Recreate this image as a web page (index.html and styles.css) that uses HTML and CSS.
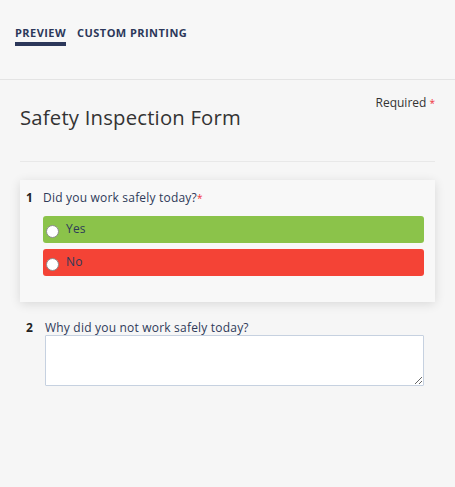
FILE: index.html
```html
<!DOCTYPE html>
<html lang="en">
<head>
<meta charset="utf-8">
<link rel="stylesheet" href="styles.css">
</head>
<body>
<header class="topbar">
  <nav class="tabs">
    <span class="tab active">PREVIEW</span>
    <span class="tab">CUSTOM PRINTING</span>
  </nav>
</header>
<main class="form">
  <div class="form-head">
    <h1 class="title">Safety Inspection Form</h1>
    <div class="required">Required <span class="star">*</span></div>
  </div>
  <div class="card">
    <div class="question">
      <span class="num">1</span>
      <div class="q-body">
        <div class="q-label">Did you work safely today?<span class="star">*</span></div>
        <label class="option yes"><input type="radio" name="q1" class="radio"><span>Yes</span></label>
        <label class="option no"><input type="radio" name="q1" class="radio"><span>No</span></label>
      </div>
    </div>
  </div>
  <div class="question q2">
    <span class="num">2</span>
    <div class="q-body">
      <div class="q-label">Why did you not work safely today?</div>
      <textarea class="answer"></textarea>
    </div>
  </div>
</main>
</body>
</html>
```
FILE: styles.css
```css
* { box-sizing: border-box; }
body {
  margin: 0;
  background: #f6f6f6;
  font-family: "Open Sans", "Liberation Sans", sans-serif;
  color: #2e3a59;
}
.topbar {
  height: 80px;
  border-bottom: 1px solid #e4e4e4;
  background: #f7f7f7;
  padding: 26px 0 0 15px;
}
.tabs { display: flex; gap: 11px; }
.tab {
  font-size: 11px;
  letter-spacing: 0.45px;
  font-weight: 700;
  color: #2c375a;
  padding-bottom: 2px;
  border-bottom: 4px solid transparent;
  line-height: 14px;
}
.tab.active { border-bottom-color: #2c375a; }
.form { padding: 0 20px; }
.form-head {
  display: flex;
  justify-content: space-between;
  align-items: flex-start;
  border-bottom: 1px solid #e8e8e8;
  height: 82px;
}
.title {
  margin: 25px 0 0 0;
  font-size: 20.3px;
  letter-spacing: 0.2px;
  font-weight: 400;
  color: #333;
  line-height: 24px;
}
.required {
  margin: 15px 0 0 0;
  font-size: 12px;
  color: #333;
  line-height: 16px;
}
.star { color: #f0323c; font-size: 10px; vertical-align: top; }
.card {
  margin-top: 18px;
  background: #f8f8f8;
  box-shadow: 0 2px 10px rgba(0,0,0,0.12);
  padding: 10px 11px 20px 6px;
}
.question { display: flex; }
.num {
  width: 17px;
  font-size: 12px;
  font-weight: 700;
  color: #222;
  line-height: 16px;
}
.q-body { flex: 1; }
.q-label {
  font-size: 12px;
  letter-spacing: 0.2px;
  line-height: 16px;
  color: #2e3a59;
  margin-bottom: 10px;
}
.option {
  display: flex;
  align-items: center;
  height: 27px;
  border-radius: 3px;
  padding-left: 3px;
  margin-bottom: 6px;
  font-size: 12px;
  letter-spacing: 0.2px;
  color: #2e3a59;
}
.option.yes { background: #8bc34a; }
.option.no { background: #f44336; }
.radio {
  appearance: none;
  -webkit-appearance: none;
  width: 13px;
  height: 13px;
  margin: 4px 7px 0 0;
  border-radius: 50%;
  background: #fff;
  border: 1px solid #8c8c8c;
}
.option span { margin-top: -3px; }
.q2 { padding: 18px 11px 0 6px; }
.q2 .num { width: 19px; }
.q2 .q-label { margin-bottom: -1px; }
.answer {
  display: block;
  width: 100%;
  height: 51px;
  border: 1px solid #c6d1e0;
  background: #fff;
  border-radius: 1px;
  margin: 0;
}
```
